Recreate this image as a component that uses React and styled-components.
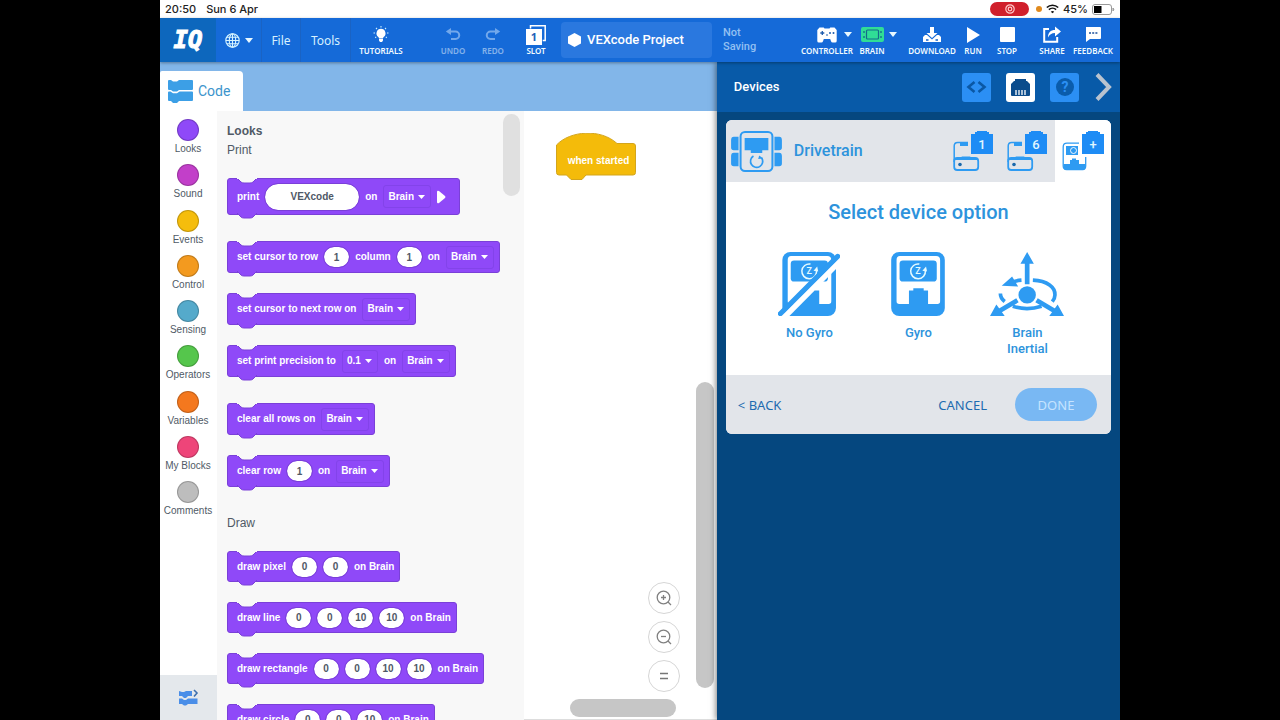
import React from "react";
import styled, { createGlobalStyle } from "styled-components";

const helvetica = `"Liberation Sans", Arial, sans-serif`;
const noto = `"Noto Sans", sans-serif`;
const roboto = `Roboto, sans-serif`;

const GlobalStyle = createGlobalStyle`
  * { box-sizing: border-box; }
  body { margin: 0; background: #000; font-family: ${helvetica}; }
  button, input, select { font: inherit; color: inherit; margin: 0; }
  button { background: none; border: 0; padding: 0; cursor: pointer; }
  svg { display: block; flex: none; }
`;

/* ---------- shell ---------- */
const Screen = styled.div`
  width: 75%;
  height: 100vh;
  margin: 0 auto;
  display: flex;
  flex-direction: column;
  overflow: hidden;
  background: #fff;
`;
const StatusBar = styled.div`
  flex: none;
  height: 18px;
  padding: 0 5px;
  display: flex;
  align-items: center;
  gap: 10px;
  font: 500 11px/18px Inter, sans-serif;
  color: #222;
`;
const StatusRight = styled.div`
  margin-left: auto;
  display: flex;
  align-items: center;
  gap: 4px;
`;
const RecordPill = styled.span`
  width: 39px;
  height: 14px;
  margin-right: 3px;
  border-radius: 7px;
  background: #d01f2b;
  display: grid;
  place-items: center;
`;
const MicDot = styled.span`
  width: 6px;
  height: 6px;
  border-radius: 50%;
  background: #e08a1e;
`;

/* ---------- toolbar ---------- */
const Toolbar = styled.header`
  flex: none;
  height: 44px;
  display: flex;
  background: #156ad8;
  color: #fff;
  font-family: ${noto};
  position: relative;
  z-index: 3;
  box-shadow: 0 1px 3px rgba(0, 0, 0, 0.35);
`;
const Logo = styled.div`
  width: 56px;
  background: #0d67bd;
  text-align: center;
  font: italic 700 24px/44px "DejaVu Sans Mono", monospace;
  -webkit-text-stroke: 1px #fff;
`;
const MenuButton = styled.button`
  width: ${(p) => p.$w}px;
  display: flex;
  align-items: center;
  justify-content: center;
  gap: 5px;
  font-size: 12px;
  color: #d6f1ff;
  border-right: 1px solid #1a63c4;
`;
const Tool = styled.button`
  width: ${(p) => p.$w}px;
  margin-right: ${(p) => p.$after || 0}px;
  display: flex;
  flex-direction: column;
  align-items: center;
  padding-top: 6px;
  font-size: 8px;
  font-weight: 600;
  line-height: 12px;
  color: #f2fbff;
  opacity: ${(p) => (p.$dim ? 0.5 : 1)};
`;
const ToolIcon = styled.span`
  width: 100%;
  height: 21px;
  display: grid;
  grid-template-columns: 1fr auto 1fr;
  align-items: center;
  justify-items: end;
  & > :first-child { grid-column: 2; }
`;
const BrainGroup = styled.div`
  display: flex;
  margin-right: 11px;
  gap: 5px;
`;
const CaretButton = styled.button`
  height: 21px;
  margin-top: 6px;
`;
const ProjectButton = styled.button`
  width: 151px;
  height: 36px;
  margin: 4px 11px 0 2px;
  padding: 0 7px;
  display: flex;
  align-items: center;
  gap: 6px;
  border-radius: 4px;
  background: #2a78df;
  font: 500 13px/36px ${roboto};
  white-space: nowrap;
`;
const SaveState = styled.div`
  width: 40px;
  padding-top: 8px;
  font: 500 11px/14px ${roboto};
  color: #93c0f2;
`;
const ToolsRight = styled.div`
  margin-left: auto;
  padding-right: 4px;
  display: flex;
`;

/* ---------- main split ---------- */
const Main = styled.div`
  flex: 1;
  min-height: 0;
  display: flex;
`;
const Editor = styled.section`
  flex: 1;
  min-width: 0;
  display: flex;
  flex-direction: column;
`;
const TabStrip = styled.div`
  flex: none;
  height: 49px;
  display: flex;
  align-items: flex-end;
  background: #82b6e9;
`;
const Tab = styled.button`
  height: 40px;
  width: 83px;
  padding-left: 8px;
  display: flex;
  align-items: center;
  gap: 5px;
  border-radius: 2px 4px 0 0;
  background: #fff;
  color: #3c94cc;
  font: 400 14px/20px ${roboto};
`;
const EditorBody = styled.div`
  flex: 1;
  min-height: 0;
  display: flex;
`;
const Sidebar = styled.nav`
  flex: none;
  width: 57px;
  display: flex;
  flex-direction: column;
  background: #fff;
`;
const CategoryList = styled.div`
  height: 407px;
  padding: 8px 1px 0 0;
  display: flex;
  flex-direction: column;
  justify-content: space-between;
`;
const Category = styled.button`
  display: flex;
  flex-direction: column;
  align-items: center;
  font-size: 10px;
  line-height: 15px;
  color: #505a66;
  white-space: nowrap;
  &::before {
    content: "";
    width: 20px;
    height: 20px;
    border-radius: 50%;
    background: ${(p) => p.$fill};
    border: 1px solid rgba(0, 0, 0, 0.2);
  }
`;
const Extensions = styled.button`
  margin-top: auto;
  height: 45px;
  background: #e4e8ec;
  display: grid;
  place-items: center;
`;
const Flyout = styled.div`
  flex: none;
  width: 307px;
  padding: 11px 0 0 10px;
  position: relative;
  overflow: hidden;
  background: #f8f8f8;
`;
const FlyoutHeading = styled.h2`
  margin: 0;
  font-size: 12px;
  line-height: 18px;
  font-weight: 700;
  color: #505a66;
`;
const FlyoutLabel = styled.h3`
  margin: 0 0 18px;
  font-size: 12px;
  line-height: 20px;
  font-weight: 400;
  color: #505a66;
`;
const BlockGroup = styled.div`
  display: flex;
  flex-direction: column;
  align-items: flex-start;
  gap: 20px;
  margin-bottom: ${(p) => p.$after || 26}px;
`;

/* ---------- blocks ---------- */
const BlockBody = styled.div`
  position: relative;
  height: ${(p) => p.$h}px;
  padding: 0 ${(p) => p.$pr || 5}px 0 9px;
  display: flex;
  align-items: center;
  gap: 6px;
  border: 1px solid #7a40d8;
  border-radius: 3px;
  background: #8f49f8;
  color: #fff;
  font-size: 10px;
  line-height: 12px;
  font-weight: 700;
  white-space: nowrap;
`;
const Notch = styled.svg`
  position: absolute;
  left: 9px;
  top: -1px;
`;
const Bump = styled.svg`
  position: absolute;
  left: 9px;
  top: calc(100% - 1px);
`;
const Pill = styled.input`
  width: ${(p) => p.$w || 25}px;
  height: ${(p) => (p.$w ? 26 : 20)}px;
  padding: 0;
  border: 0;
  border-radius: 13px;
  outline: 1px solid #7a40d8;
  background: #fff;
  color: #4f5866;
  text-align: center;
`;
const PickWrap = styled.span`
  position: relative;
  display: flex;
  align-items: center;
`;
const PickSelect = styled.select`
  appearance: none;
  height: 23px;
  padding: 0 16px 0 4px;
  border: 1px solid #8343ea;
  border-radius: 3px;
  background: transparent;
`;
const PickCaret = styled.svg`
  position: absolute;
  right: 6px;
  pointer-events: none;
`;

/* ---------- workspace ---------- */
const Workspace = styled.div`
  flex: 1;
  position: relative;
  background: #fff;
  border-bottom: 1px solid #ddd;
`;
const HatBlock = styled.div`
  position: absolute;
  left: 32px;
  top: 22px;
  width: 80px;
  height: 48px;
  display: flex;
  justify-content: center;
  padding: 21px 0 0 5px;
  color: #fff;
  font-size: 10px;
  line-height: 14px;
  font-weight: 700;
  & > svg { position: absolute; left: 0; top: 0; }
  & > span { position: relative; }
`;
const ZoomStack = styled.div`
  position: absolute;
  right: 37px;
  bottom: 27px;
  display: flex;
  flex-direction: column;
  gap: 7px;
`;
const ZoomButton = styled.button`
  width: 32px;
  height: 32px;
  border: 1px solid #d6d6d6;
  border-radius: 50%;
  background: #fff;
  display: grid;
  place-items: center;
`;
const Scrollbar = styled.div`
  position: absolute;
  border-radius: 9px;
  background: #c6c6c6;
`;
const FlyoutBar = styled(Scrollbar)`
  right: 4px;
  top: 3px;
  width: 17px;
  height: 82px;
  background: #e0e0e0;
`;
const VerticalBar = styled(Scrollbar)`
  right: 3px;
  bottom: 31px;
  width: 18px;
  height: 306px;
`;
const HorizontalBar = styled(Scrollbar)`
  right: 41px;
  bottom: 2px;
  width: 106px;
  height: 18px;
`;

/* ---------- devices panel ---------- */
const Panel = styled.aside`
  flex: none;
  width: 42%;
  position: relative;
  z-index: 2;
  background: #05477f;
  box-shadow: -1px 0 6px rgba(0, 0, 0, 0.5);
  font-family: ${roboto};
`;
const PanelHeader = styled.div`
  height: 50px;
  padding: 0 8px 0 17px;
  display: flex;
  align-items: center;
  background: #085aa8;
  color: #fff;
`;
const PanelTitle = styled.h1`
  margin: 0 auto 0 0;
  font-size: 13px;
  line-height: 20px;
  font-weight: 500;
`;
const PanelButton = styled.button`
  width: 29px;
  height: 29px;
  margin-right: ${(p) => p.$after || 15}px;
  border-radius: 3px;
  display: grid;
  place-items: center;
  background: ${(p) => (p.$active ? "#fff" : "#2b8ff4")};
`;
const Card = styled.div`
  margin: 8px 9px 0;
  border-radius: 6px;
  overflow: hidden;
  background: #fff;
  color: #2d93dc;
`;
const CardHeader = styled.div`
  height: 62px;
  padding-left: 5px;
  display: flex;
  align-items: center;
  background: #e2e5ea;
`;
const CardTitle = styled.h2`
  margin: 0 auto 0 12px;
  font-size: 16px;
  line-height: 24px;
  font-weight: 500;
`;
const PortTab = styled.button`
  height: 62px;
  width: ${(p) => p.$w || 54}px;
  display: flex;
  align-items: center;
  padding-left: ${(p) => (p.$active ? 7 : 6)}px;
  background: ${(p) => (p.$active ? "#fff" : "transparent")};
`;
const Options = styled.div`
  padding: 18px 0 18px;
  text-align: center;
`;
const OptionsTitle = styled.h3`
  margin: 0 0 16px;
  font-size: 20px;
  line-height: 24px;
  font-weight: 500;
`;
const OptionGrid = styled.div`
  display: grid;
  grid-template-columns: repeat(3, 109px);
  justify-content: center;
`;
const Option = styled.button`
  padding-top: 12px;
  display: flex;
  flex-direction: column;
  align-items: center;
  justify-content: flex-start;
  gap: 9px;
  font-size: 13px;
  line-height: 16px;
  font-weight: 500;
  height: 117px;
`;
const OptionLabel = styled.span`
  width: 54px;
`;
const CardFooter = styled.div`
  height: 59px;
  padding: 0 14px 0 12px;
  display: flex;
  align-items: center;
  background: #e2e5ea;
  font-family: ${noto};
  font-size: 13px;
  line-height: 18px;
`;
const FooterButton = styled.button`
  color: #1d6bb0;
  margin-right: ${(p) => (p.$push ? "auto" : "28px")};
`;
const DoneButton = styled.button`
  width: 82px;
  height: 33px;
  border-radius: 17px;
  background: #79b8f3;
  color: #c6e4ff;
`;

/* ---------- drawings ---------- */
const BLUE = "#2e9bf2";

const Caret = () => (
  <svg width="8" height="5" viewBox="0 0 8 5"><path d="M0 0h8L4 5z" fill="#e8f8ff" /></svg>
);
const Globe = () => (
  <svg width="15" height="15" viewBox="0 0 15 15" fill="none" stroke="#d6f4ff" strokeWidth="1.1">
    <circle cx="7.5" cy="7.5" r="6.7" /><ellipse cx="7.5" cy="7.5" rx="3.2" ry="6.7" />
    <path d="M7.5 1v13M1 7.5h13M2 4.2h11M2 10.8h11" />
  </svg>
);
const Bulb = () => (
  <svg width="16" height="17" viewBox="0 0 16 17">
    <path d="M8 2.800a4.500 4.500 0 0 1 2.700 8.100c-.5.400-.7.900-.7 1.600H6c0-.7-.2-1.200-.7-1.600A4.500 4.500 0 0 1 8 2.800zM6 13h4v1.500L9 16H7l-1-1.500z" fill="#fff" />
    <path d="M8 0v1.500M3 2l1 1M13 2l-1 1M.5 7H2M14 7h1.500M2.200 11.700l1-.8M13.800 11.700l-1-.8" stroke="#cdefff" strokeWidth="1.1" />
  </svg>
);
const Undo = ({ flip }) => (
  <svg width="16" height="13" viewBox="0 0 16 13">
    <g transform={flip ? "translate(16 0) scale(-1 1)" : undefined}>
      <path d="M4 3.500h6.500a3.600 3.600 0 0 1 0 7.500H6" fill="none" stroke="#cfe6ff" strokeWidth="2" />
      <path d="M.8 3.500L6 0v7z" fill="#cfe6ff" />
    </g>
  </svg>
);
const Slot = () => (
  <svg width="20" height="20" viewBox="0 0 20 20">
    <path d="M4.500 3.500V.8h14.700v14.700h-2.500" fill="none" stroke="#fff" strokeWidth="1.500" />
    <rect x="0" y="4" width="16" height="16" fill="#fff" />
    <text x="8" y="16" textAnchor="middle" fontFamily="Noto Sans" fontWeight="700" fontSize="11" fill="#2461b8">1</text>
  </svg>
);
const Hexagon = () => (
  <svg width="13" height="14" viewBox="0 0 13 14"><path d="M6.500 0L13 3.500v7L6.500 14 0 10.500v-7z" fill="#fff" /></svg>
);
const Gamepad = () => (
  <svg width="20" height="16" viewBox="0 0 20 16">
    <path d="M2.500.5h4.200l.8 1h5l.8-1h4.200L19.700 3v11q0 1.500-1.500 1.500h-2.600q-1.200 0-1.600-1.200L13.200 12H6.800L6 14.300q-.4 1.200-1.600 1.200H1.800Q.3 15.500.3 14V3z" fill="#fff" />
    <path d="M3.300 6h4M5.300 4v4" stroke="#1e5cae" strokeWidth="1.300" />
    <circle cx="13" cy="6" r="1" fill="#1e5cae" /><circle cx="16.500" cy="6" r="1" fill="#1e5cae" />
    <path d="M9 8h2" stroke="#1e5cae" />
  </svg>
);
const BrainIcon = () => (
  <svg width="23" height="15" viewBox="0 0 23 15">
    <rect width="23" height="15" rx="2" fill="#30dd96" />
    <rect x="5.500" y="3" width="12" height="9" rx="1" fill="none" stroke="#136c8a" strokeWidth="1.200" />
    <path d="M3 4v2M3 9v2M20 4v2M20 9v2" stroke="#136c8a" strokeWidth="1.300" />
  </svg>
);
const Download = () => (
  <svg width="18" height="17" viewBox="0 0 18 17">
    <path d="M7 1h4v6h3.500L9 12 3.500 7H7z" fill="#fff" />
    <path d="M0 11l2-2h2l5 4.500L14 9h2l2 2v5H0z" fill="#fff" />
    <path d="M3 14h2.500M12.500 14H15" stroke="#1562c8" strokeWidth="1.300" />
  </svg>
);
const Play = () => (
  <svg width="13" height="16" viewBox="0 0 13 16"><path d="M0 0l13 8-13 8z" fill="#fff" /></svg>
);
const Stop = () => (
  <svg width="15" height="15" viewBox="0 0 15 15"><rect width="15" height="15" rx="1" fill="#fff" /></svg>
);
const Share = () => (
  <svg width="19" height="17" viewBox="0 0 19 17">
    <path d="M6 3H1.200v12.800h13V11" fill="none" stroke="#fff" strokeWidth="2" />
    <path d="M5 11.500c0-5 2.500-7.500 7-7.500V.5l6 5-6 5V7c-3.500 0-5.500 1.500-7 4.500z" fill="#fff" />
  </svg>
);
const Feedback = () => (
  <svg width="16" height="15" viewBox="0 0 16 15">
    <path d="M1 0h14q1 0 1 1v10q0 1-1 1H5l-4 3V1z" fill="#fff" />
    <path d="M4 6h2M7.200 6h2M10.400 6h2" stroke="#1a4f9c" strokeWidth="1.700" />
  </svg>
);
const CodeTabIcon = () => (
  <svg width="25" height="23" viewBox="0 0 25 23" fill="#3c9fe6">
    <path d="M0 1q0-1 1-1h2l2 1.500h4L11 0h13q1 0 1 1v8q0 1-1 1H11l-2 1.500H5L3 10H1q-1 0-1-1z" />
    <path d="M0 12.500q0-1 1-1h1.500L5 13.200h4l2.500-1.700H24q1 0 1 1v7.500q0 1-1 1H11L9 23H5l-2-2H1q-1 0-1-1z" />
  </svg>
);
const ExtensionsIcon = () => (
  <svg width="20" height="17" viewBox="0 0 20 17" fill="#4a8ee8">
    <path d="M0 2l3 1h2l2-1h6v5H9l-2 2H5L3 7H0zM0 9.500h3l2 1.500h2l2-1.500h9.500V15H9l-2 1.500H5L3 15H0z" />
    <path d="M15 1l3 3-3 3.500" fill="none" stroke="#3d6fae" strokeWidth="1.600" />
  </svg>
);
const Wifi = () => (
  <svg width="13" height="10" viewBox="0 0 13 10" fill="none" stroke="#111" strokeWidth="1.600">
    <path d="M.8 3.500a8.200 8.200 0 0 1 11.400 0M2.900 5.700a5.200 5.200 0 0 1 7.200 0" /><path d="M4.800 7.700a2.600 2.600 0 0 1 3.400 0L6.500 9.300z" fill="#111" stroke="none" />
  </svg>
);
const Battery = () => (
  <svg width="23" height="11" viewBox="0 0 23 11">
    <rect x=".5" y=".5" width="19" height="10" rx="2.500" fill="#fff" stroke="#999" />
    <rect x="2" y="2" width="7.500" height="7" fill="#000" /><path d="M21 4q1.500 1.500 0 3z" fill="#999" stroke="#999" />
  </svg>
);
const RecordMark = () => (
  <svg width="10" height="10" viewBox="0 0 10 10"><circle cx="5" cy="5" r="4.200" fill="none" stroke="#ffc9c9" strokeWidth="1.200" /><circle cx="5" cy="5" r="1.800" fill="none" stroke="#ffc9c9" strokeWidth="1.200" /></svg>
);
const Magnifier = ({ plus }) => (
  <svg width="16" height="16" viewBox="0 0 16 16" fill="none" stroke="#808080" strokeWidth="1.300">
    <circle cx="7.500" cy="7.500" r="6.300" /><path d="M12 12l3 3" />
    <path d={plus ? "M5 7.500h5M7.500 5v5" : "M5 7.500h5"} />
  </svg>
);
const Equals = () => (
  <svg width="10" height="8" viewBox="0 0 10 8"><path d="M1 1.500h8M1 6.500h8" stroke="#777" strokeWidth="1.500" /></svg>
);
const CodeMark = () => (
  <svg width="21" height="12" viewBox="0 0 21 12" fill="none" stroke="#0a58a5" strokeWidth="2.600"><path d="M8.500 1L2.500 6l6 5M12.500 1l6 5-6 5" /></svg>
);
const PortMark = () => (
  <svg width="19" height="19" viewBox="0 0 19 19">
    <path d="M4 3V1h11v2h1l3 3v11q0 1-1 1H1q-1 0-1-1V6l3-3z" fill="#0b4c8c" />
    <path d="M5 12v5M8 12v5M11 12v5M14 12v5" stroke="#fff" strokeWidth="1.300" />
  </svg>
);
const HelpMark = () => (
  <svg width="18" height="18" viewBox="0 0 18 18">
    <circle cx="9" cy="9" r="9" fill="#0a5cab" />
    <text x="9" y="14" textAnchor="middle" fontFamily="Roboto" fontWeight="700" fontSize="14" fill="#2b8ff4">?</text>
  </svg>
);
const Chevron = () => (
  <svg width="17" height="28" viewBox="0 0 17 28"><path d="M2 1.500L14 14 2 26.500" fill="none" stroke="#b9c3cf" strokeWidth="4" /></svg>
);
const DrivetrainIcon = () => (
  <svg width="51" height="41" viewBox="0 0 150 121" fill={BLUE}>
    <path d="M22 17v40H8q-8 0-8-8V27q0-10 8-10zM22 64v40H8q-8 0-8-8V74q0-10 8-10zM128 17v40h14q8 0 8-8V27q0-10-8-10zM128 64v40h14q8 0 8-8V74q0-10-8-10z" />
    <rect x="28" y="3" width="94" height="115" rx="13" fill="none" stroke={BLUE} strokeWidth="6" />
    <path d="M40 21h70v36H92v8H58v-8H40z" />
    <path d="M66 74a18 18 0 1 0 24 5" fill="none" stroke={BLUE} strokeWidth="5" /><path d="M80 83l3-11 12 9z" />
  </svg>
);
const PortBadge = ({ x, label }) => (
  <g>
    <path d={`M${x} 3h4V1h2V0h10v1h2v2h4v20h-22z`} fill="#1e8cf5" />
    <text x={x + 11} y="18" textAnchor="middle" fontFamily="Roboto" fontWeight="500" fontSize="13" fill="#e2f7ff">{label}</text>
  </g>
);
const MotorIcon = ({ label }) => (
  <svg width="41" height="40" viewBox="0 0 41 40">
    <path d="M1.200 31V15q0-3.500 3.500-3.500H15" fill="none" stroke={BLUE} strokeWidth="1.500" />
    <path d="M7 11h8v4H7z" fill={BLUE} />
    <rect x="1.200" y="27" width="24" height="12" rx="3" fill="none" stroke={BLUE} strokeWidth="1.800" />
    <path d="M2 27h5l2-1.500h8L19 27h5v2H2z" fill={BLUE} /><circle cx="7" cy="33.500" r="1.800" fill="#1c69ac" />
    <PortBadge x={18} label={label} />
  </svg>
);
const BrainPortIcon = () => (
  <svg width="43" height="40" viewBox="0 0 43 40">
    <path d="M17 12.200H5Q1.200 12.200 1.200 16v19q0 3.500 3.500 3.500h16q3 0 3-3.500V26" fill="none" stroke={BLUE} strokeWidth="1.300" />
    <path d="M4 15h12v9H4z" fill={BLUE} />
    <circle cx="11.500" cy="19.500" r="3" fill="none" stroke="#fff" strokeWidth=".9" />
    <path d="M1.500 33H8v-4h2v-1.500h4V29h3v4h6.500v3q0 3-3 3H4.500q-3 0-3-3z" fill={BLUE} />
    <PortBadge x={20} label="+" />
  </svg>
);
const GyroShape = () => (
  <g>
    <rect width="160" height="191" rx="24" fill={BLUE} />
    <path d="M26 12h108q12 0 12 12v123q0 8-8 8h-28v-40H97v-7H66v7H53v40H24q-8 0-8-8V24q0-12 10-12z" fill="#fff" />
    <rect x="25" y="25" width="111" height="63" rx="10" fill={BLUE} />
    <path d="M84 36a22 22 0 1 0 18 19" fill="none" stroke="#e6fbff" strokeWidth="4.500" />
    <path d="M93 56l11-13 3 15z" fill="#e6fbff" />
    <text x="80" y="67" textAnchor="middle" fontFamily="Roboto" fontWeight="500" fontSize="27" fill="#e6fbff">Z</text>
  </g>
);
const GyroIcon = () => (
  <svg width="54" height="64" viewBox="0 0 160 191"><GyroShape /></svg>
);
const NoGyroIcon = () => (
  <svg width="62" height="64" viewBox="-13 0 185 191">
    <GyroShape />
    <path d="M0 172L-14 191h32L0 191z" fill="#fff" />
    <path d="M5 195L176 23" stroke="#fff" strokeWidth="17" />
    <path d="M-6 184L165 13" stroke={BLUE} strokeWidth="15" strokeLinecap="round" />
  </svg>
);
const InertialIcon = () => (
  <svg width="74" height="64" viewBox="0 0 221 191" fill={BLUE}>
    <g fill="none" stroke={BLUE} strokeWidth="11">
      <path d="M128 84C172 86 195 106 194 128q0 10-8 20" />
      <path d="M94 84q-15 1-27 6" />
      <path d="M31 124q0 14 13 24" />
      <path d="M68 162q42 14 86 0" />
    </g>
    <path d="M35 101L66 73l18 30z" />
    <path d="M111 96V30M82 144L28 176M139 144l54 32" stroke={BLUE} strokeWidth="14" />
    <path d="M111 0l20 35H91zM0 191l19-34 25 34zM221 191l-19-34-25 34z" />
    <circle cx="111" cy="128" r="26" />
  </svg>
);
const HatShape = () => (
  <svg width="80" height="48" viewBox="0 0 80 48">
    <path d="M.5 12C14-2.500 45-4.500 61 10.500h16q2.500 0 2.500 2.500v26.500q0 2.500-2.500 2.500H30l-4 4.500H15L10.500 42H3Q.5 42 .5 39.500z" fill="#f4bb0a" stroke="#d3a51c" />
  </svg>
);

/* ---------- composed parts ---------- */
const Block = ({ h = 32, pr, children }) => (
  <BlockBody $h={h} $pr={pr}>
    <Notch width="20" height="6" viewBox="0 0 20 6">
      <path d="M0 0l4 4q1 1 3 1h6q2 0 3-1l4-4z" fill="#f8f8f8" stroke="#7a40d8" />
      <path d="M0 0h20" stroke="#f8f8f8" strokeWidth="2" />
    </Notch>
    {children}
    <Bump width="20" height="6" viewBox="0 0 20 6">
      <path d="M0 0l4 4q1 1 3 1h6q2 0 3-1l4-4z" fill="#8f49f8" stroke="#7a40d8" />
      <path d="M1 0h18" stroke="#8f49f8" strokeWidth="2" />
    </Bump>
  </BlockBody>
);
const Num = ({ v, name }) => <Pill type="text" defaultValue={v} aria-label={name} />;
const Pick = ({ v = "Brain", name = "Device" }) => (
  <PickWrap>
    <PickSelect aria-label={name} defaultValue={v}>
      <option>{v}</option>
    </PickSelect>
    <PickCaret width="7" height="4" viewBox="0 0 7 4"><path d="M0 0h7L3.500 4z" fill="#fff" /></PickCaret>
  </PickWrap>
);

const categories = [
  ["Looks", "#8f49f8"],
  ["Sound", "#c23fc9"],
  ["Events", "#f5bd0c"],
  ["Control", "#f39a1f"],
  ["Sensing", "#55aacb"],
  ["Operators", "#55c64c"],
  ["Variables", "#f4781e"],
  ["My Blocks", "#ee4579"],
  ["Comments", "#bdbdbd"],
];

const drawBlocks = [
  ["draw pixel", ["0", "0"]],
  ["draw line", ["0", "0", "10", "10"]],
  ["draw rectangle", ["0", "0", "10", "10"]],
  ["draw circle", ["0", "0", "10"]],
];

export default function App() {
  return (
    <Screen>
      <GlobalStyle />
      <StatusBar>
        <span>20:50</span>
        <span>Sun 6 Apr</span>
        <StatusRight>
          <RecordPill><RecordMark /></RecordPill>
          <MicDot />
          <Wifi />
          <span>45%</span>
          <Battery />
        </StatusRight>
      </StatusBar>

      <Toolbar>
        <Logo>IQ</Logo>
        <MenuButton $w={46} aria-label="Language"><Globe /><Caret /></MenuButton>
        <MenuButton $w={39}>File</MenuButton>
        <MenuButton $w={50}>Tools</MenuButton>
        <Tool $w={60} $after={22}><ToolIcon><Bulb /></ToolIcon>TUTORIALS</Tool>
        <Tool $w={40} $dim><ToolIcon><Undo /></ToolIcon>UNDO</Tool>
        <Tool $w={40} $dim><ToolIcon><Undo flip /></ToolIcon>REDO</Tool>
        <Tool $w={46}><ToolIcon><Slot /></ToolIcon>SLOT</Tool>
        <ProjectButton><Hexagon />VEXcode Project</ProjectButton>
        <SaveState>Not Saving</SaveState>
        <ToolsRight>
          <Tool $w={50} $after={8}><ToolIcon><Gamepad /><Caret /></ToolIcon>CONTROLLER</Tool>
          <BrainGroup>
            <Tool $w={24}><ToolIcon><BrainIcon /></ToolIcon>BRAIN</Tool>
            <CaretButton aria-label="Brain menu"><Caret /></CaretButton>
          </BrainGroup>
          <Tool $w={48}><ToolIcon><Download /></ToolIcon>DOWNLOAD</Tool>
          <Tool $w={34}><ToolIcon><Play /></ToolIcon>RUN</Tool>
          <Tool $w={34} $after={10}><ToolIcon><Stop /></ToolIcon>STOP</Tool>
          <Tool $w={36}><ToolIcon><Share /></ToolIcon>SHARE</Tool>
          <Tool $w={46}><ToolIcon><Feedback /></ToolIcon>FEEDBACK</Tool>
        </ToolsRight>
      </Toolbar>

      <Main>
        <Editor>
          <TabStrip>
            <Tab><CodeTabIcon />Code</Tab>
          </TabStrip>
          <EditorBody>
            <Sidebar>
              <CategoryList>
                {categories.map(([name, fill]) => (
                  <Category key={name} $fill={fill}>{name}</Category>
                ))}
              </CategoryList>
              <Extensions aria-label="Extensions"><ExtensionsIcon /></Extensions>
            </Sidebar>

            <Flyout>
              <FlyoutHeading>Looks</FlyoutHeading>
              <FlyoutLabel>Print</FlyoutLabel>
              <BlockGroup>
                <Block h={37} pr={13}>
                  print <Pill type="text" $w={94} defaultValue="VEXcode" aria-label="Text" /> on <Pick />
                  <svg width="9" height="14" viewBox="0 0 9 14"><path d="M0 2q0-2 2-1l6 5q1 1 0 2l-6 5q-2 1-2-1z" fill="#fff" /></svg>
                </Block>
              </BlockGroup>
              <BlockGroup>
                <Block>
                  set cursor to row <Num v="1" name="Row" /> column <Num v="1" name="Column" /> on <Pick />
                </Block>
                <Block>set cursor to next row on <Pick /></Block>
                <Block>set print precision to <Pick v="0.1" name="Precision" /> on <Pick /></Block>
              </BlockGroup>
              <BlockGroup>
                <Block>clear all rows on <Pick /></Block>
                <Block>clear row <Num v="1" name="Row" /> on <Pick /></Block>
              </BlockGroup>
              <FlyoutLabel>Draw</FlyoutLabel>
              <BlockGroup>
                {drawBlocks.map(([name, values]) => (
                  <Block key={name} h={31}>
                    {name}
                    {values.map((v, i) => <Num key={i} v={v} name={`${name} value ${i + 1}`} />)}
                    on Brain
                  </Block>
                ))}
              </BlockGroup>
              <FlyoutBar />
            </Flyout>

            <Workspace>
              <HatBlock><HatShape /><span>when started</span></HatBlock>
              <ZoomStack>
                <ZoomButton aria-label="Zoom in"><Magnifier plus /></ZoomButton>
                <ZoomButton aria-label="Zoom out"><Magnifier /></ZoomButton>
                <ZoomButton aria-label="Reset zoom"><Equals /></ZoomButton>
              </ZoomStack>
              <VerticalBar />
              <HorizontalBar />
            </Workspace>
          </EditorBody>
        </Editor>

        <Panel>
          <PanelHeader>
            <PanelTitle>Devices</PanelTitle>
            <PanelButton aria-label="Code viewer"><CodeMark /></PanelButton>
            <PanelButton $active aria-label="Devices"><PortMark /></PanelButton>
            <PanelButton $after={16} aria-label="Help"><HelpMark /></PanelButton>
            <button aria-label="Close panel"><Chevron /></button>
          </PanelHeader>
          <Card>
            <CardHeader>
              <DrivetrainIcon />
              <CardTitle>Drivetrain</CardTitle>
              <PortTab aria-label="Port 1"><MotorIcon label="1" /></PortTab>
              <PortTab aria-label="Port 6"><MotorIcon label="6" /></PortTab>
              <PortTab $active $w={56} aria-label="Add gyro"><BrainPortIcon /></PortTab>
            </CardHeader>
            <Options>
              <OptionsTitle>Select device option</OptionsTitle>
              <OptionGrid>
                <Option><NoGyroIcon /><OptionLabel>No Gyro</OptionLabel></Option>
                <Option><GyroIcon /><OptionLabel>Gyro</OptionLabel></Option>
                <Option><InertialIcon /><OptionLabel>Brain Inertial</OptionLabel></Option>
              </OptionGrid>
            </Options>
            <CardFooter>
              <FooterButton $push>&lt; BACK</FooterButton>
              <FooterButton>CANCEL</FooterButton>
              <DoneButton disabled>DONE</DoneButton>
            </CardFooter>
          </Card>
        </Panel>
      </Main>
    </Screen>
  );
}
